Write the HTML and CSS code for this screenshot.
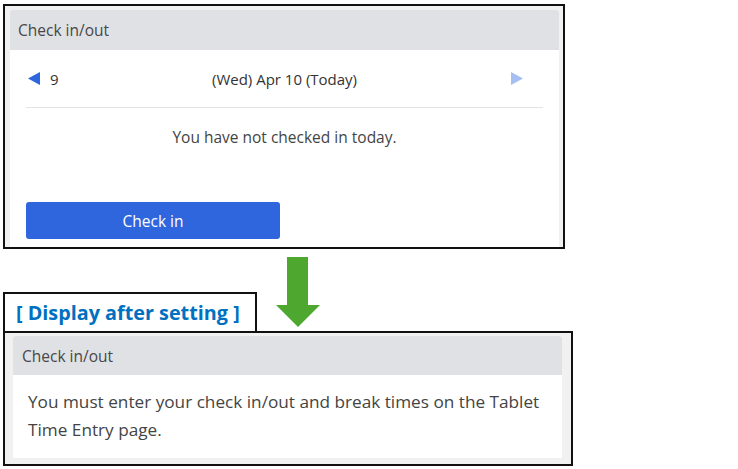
FILE: index.html
```html
<!DOCTYPE html>
<html>
<head>
<meta charset="utf-8">
<link rel="stylesheet" href="styles.css">
</head>
<body>
<div class="page">
  <div class="frame frame-top">
    <div class="card">
      <div class="card-head">Check in/out</div>
      <div class="card-body">
        <div class="date-row">
          <div class="nav nav-prev">
            <svg width="12" height="13" viewBox="0 0 12 13"><polygon points="12,0 12,13 0,6.5" fill="#2d66dd"/></svg>
            <span class="nav-num">9</span>
          </div>
          <div class="date">(Wed) Apr 10 (Today)</div>
          <div class="nav nav-next">
            <svg width="12" height="13" viewBox="0 0 12 13"><polygon points="0,0 0,13 12,6.5" fill="#a6bff2"/></svg>
          </div>
        </div>
        <div class="msg">You have not checked in today.</div>
        <button class="btn">Check in</button>
      </div>
    </div>
  </div>

  <div class="mid-row">
    <div class="label">[ Display after setting ]</div>
    <svg class="arrow" width="44" height="70" viewBox="0 0 44 70"><polygon points="11,0 32,0 32,48 44,48 22,70 0,48 11,48" fill="#4ea72e"/></svg>
  </div>

  <div class="frame frame-bottom">
    <div class="card">
      <div class="card-head head-2">Check in/out</div>
      <div class="card-body body-2">You must enter your check in/out and break times on the Tablet Time Entry page.</div>
    </div>
  </div>
</div>
</body>
</html>
```
FILE: styles.css
```css
html, body {
  margin: 0;
  padding: 0;
  background: #ffffff;
}
.page {
  padding: 4px 0 0 3px;
  font-family: "Open Sans", "Liberation Sans", sans-serif;
  color: #3f3f3f;
}
.frame {
  border: 2px solid #111;
  background: #f1f1f1;
  box-sizing: border-box;
}
.frame-top {
  width: 562px;
  height: 245px;
  padding: 4px 4px 0 5px;
  overflow: hidden;
}
.card {
  background: #fff;
  border-radius: 3px 3px 0 0;
  overflow: hidden;
}
.frame-top .card {
  height: 240px;
}
.card-head {
  height: 40px;
  background: #e0e1e5;
  display: flex;
  align-items: center;
  padding-left: 8px;
  font-size: 15.5px;
  color: #474747;
}
.card-body {
  padding: 0 16px;
}
.date-row {
  height: 57px;
  display: flex;
  align-items: center;
  justify-content: space-between;
  border-bottom: 1px solid #e3e3e3;
  padding: 0 2px;
  font-size: 15px;
  color: #333;
}
.nav {
  display: flex;
  align-items: center;
  width: 60px;
  box-sizing: border-box;
}
.nav-next {
  justify-content: flex-end;
  padding-right: 18px;
}
.nav-num {
  margin-left: 10px;
}
.msg {
  text-align: center;
  font-size: 15.5px;
  color: #444;
  padding-top: 18px;
  height: 76px;
}
.btn {
  display: block;
  width: 254px;
  height: 37px;
  border: none;
  border-radius: 3px;
  background: #2f66dd;
  color: #fff;
  font-family: inherit;
  font-size: 15.5px;
  padding: 0;
}
.mid-row {
  display: flex;
  align-items: flex-end;
  margin-top: 8px;
  margin-bottom: -2px;
  position: relative;
  z-index: 1;
}
.label {
  width: 254px;
  height: 41px;
  box-sizing: border-box;
  border: 2px solid #111;
  background: #fff;
  color: #0070c0;
  font-weight: 700;
  font-size: 19.8px;
  padding-left: 11px;
  display: flex;
  align-items: center;
}
.arrow {
  display: block;
  margin-left: 19px;
  margin-bottom: 6px;
}
.frame-bottom {
  width: 570px;
  height: 135px;
  padding: 3px 9px 6px 8px;
}
.head-2 {
  height: 39px;
  padding-left: 9px;
}
.body-2 {
  padding: 13px 15px 0 15px;
  height: 83px;
  box-sizing: border-box;
  font-size: 17.2px;
  line-height: 28px;
  color: #444;
}
```
